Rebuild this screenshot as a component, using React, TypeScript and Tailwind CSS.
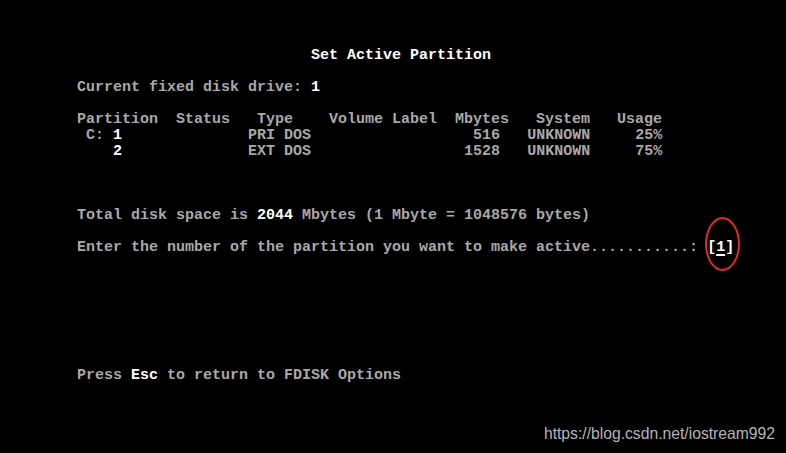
import React from "react";

const W = ({ children }: { children: React.ReactNode }) => (
  <span className="text-white">{children}</span>
);

const Line = ({ children }: { children?: React.ReactNode }) => (
  <div className="h-[16px] leading-[16px] whitespace-pre">{children ?? ""}</div>
);

export default function App() {
  const sp = (n: number) => " ".repeat(n);
  return (
    <div className="relative w-[786px] h-[453px] bg-black overflow-hidden">
      <div
        className="pl-[77px] pt-[32px] text-[15px] font-bold text-[#a8a8a8]"
        style={{ fontFamily: '"Liberation Mono", "DejaVu Sans Mono", monospace' }}
      >
        <Line />
        <Line>
          {sp(26)}
          <W>Set Active Partition</W>
        </Line>
        <Line />
        <Line>
          Current fixed disk drive: <W>1</W>
        </Line>
        <Line />
        <Line>Partition  Status   Type    Volume Label  Mbytes   System   Usage</Line>
        <Line>
          {" C: "}
          <W>1</W>
          {sp(14)}PRI DOS{sp(18)}516{sp(3)}UNKNOWN{sp(5)}25%
        </Line>
        <Line>
          {sp(4)}
          <W>2</W>
          {sp(14)}EXT DOS{sp(17)}1528{sp(3)}UNKNOWN{sp(5)}75%
        </Line>
        <Line />
        <Line />
        <Line />
        <Line>
          Total disk space is <W>2044</W> Mbytes (1 Mbyte = 1048576 bytes)
        </Line>
        <Line />
        <Line>
          Enter the number of the partition you want to make active...........:{" "}
          <W>
            [<span className="underline decoration-2 underline-offset-[3px]">1</span>]
          </W>
        </Line>
        <Line />
        <Line />
        <Line />
        <Line />
        <Line />
        <Line />
        <Line />
        <Line>
          Press <W>Esc</W> to return to FDISK Options
        </Line>
      </div>

      <div className="absolute left-[705px] top-[217px] w-[35px] h-[54px] rounded-[50%] border-2 border-[#e8262b]" />

      <div
        className="absolute right-[11px] top-[425px] text-[15.7px] leading-[18px] text-[#b4b4b4]"
        style={{ fontFamily: '"Liberation Sans", Arial, sans-serif' }}
      >
        https://blog.csdn.net/iostream992
      </div>
    </div>
  );
}
